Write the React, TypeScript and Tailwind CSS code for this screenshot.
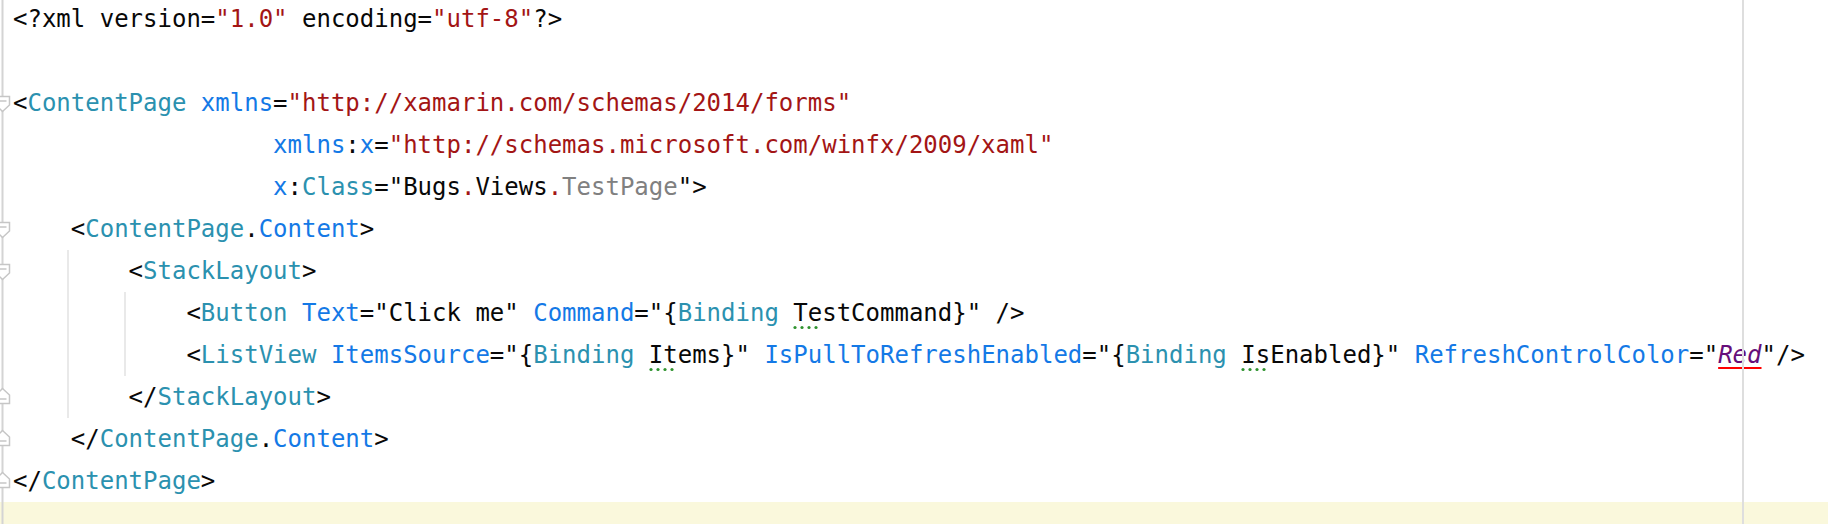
import React from "react";

type Seg = { t: string; c?: string; dots?: boolean; red?: boolean };

const K = "text-[#080808]";
const TEAL = "text-[#2b91af]";
const BLUE = "text-[#1479e6]";
const STR = "text-[#a31515]";
const GRAY = "text-[#808080]";

const s = (t: string, c: string = K): Seg => ({ t, c });

const lines: { segs: Seg[]; indent: number; fold?: "open" | "close" }[] = [
  {
    indent: 0,
    segs: [s("<?xml version="), s('"1.0"', STR), s(" encoding="), s('"utf-8"', STR), s("?>")],
  },
  { indent: 0, segs: [] },
  {
    indent: 0,
    fold: "open",
    segs: [s("<"), s("ContentPage", TEAL), s(" "), s("xmlns", BLUE), s("="), s('"http://xamarin.com/schemas/2014/forms"', STR)],
  },
  {
    indent: 18,
    segs: [s("xmlns", BLUE), s(":"), s("x", BLUE), s("="), s('"http://schemas.microsoft.com/winfx/2009/xaml"', STR)],
  },
  {
    indent: 18,
    segs: [
      s("x", BLUE),
      s(":"),
      s("Class", TEAL),
      s('="Bugs'),
      s(".", STR),
      s("Views"),
      s(".", STR),
      s("TestPage", GRAY),
      s('">'),
    ],
  },
  { indent: 4, fold: "open", segs: [s("<"), s("ContentPage", TEAL), s("."), s("Content", BLUE), s(">")] },
  { indent: 8, fold: "open", segs: [s("<"), s("StackLayout", TEAL), s(">")] },
  {
    indent: 12,
    segs: [
      s("<"),
      s("Button", TEAL),
      s(" "),
      s("Text", BLUE),
      s('="Click me" '),
      s("Command", BLUE),
      s('="{'),
      s("Binding", TEAL),
      s(" "),
      { t: "TestCommand", c: K, dots: true },
      s('}" />'),
    ],
  },
  {
    indent: 12,
    segs: [
      s("<"),
      s("ListView", TEAL),
      s(" "),
      s("ItemsSource", BLUE),
      s('="{'),
      s("Binding", TEAL),
      s(" "),
      { t: "Items", c: K, dots: true },
      s('}" '),
      s("IsPullToRefreshEnabled", BLUE),
      s('="{'),
      s("Binding", TEAL),
      s(" "),
      { t: "IsEnabled", c: K, dots: true },
      s('}" '),
      s("RefreshControlColor", BLUE),
      s('="'),
      { t: "Red", c: "text-[#660e7a]", red: true },
      s('"/>'),
    ],
  },
  { indent: 8, fold: "close", segs: [s("</"), s("StackLayout", TEAL), s(">")] },
  { indent: 4, fold: "close", segs: [s("</"), s("ContentPage", TEAL), s("."), s("Content", BLUE), s(">")] },
  { indent: 0, fold: "close", segs: [s("</"), s("ContentPage", TEAL), s(">")] },
  { indent: 0, segs: [] },
];

function Gutter({ fold }: { fold?: "open" | "close" }) {
  return (
    <svg width="13" height="42" viewBox="0 0 13 42" className="block">
      <rect x="1.5" y="0" width="2" height="42" fill="#d4d4d4" />
      {fold === "open" && (
        <g>
          <polygon points="-4,14.5 9.5,14.5 9.5,23 2.5,29.5 -4,23" fill="#ffffff" stroke="#c6c6c6" strokeWidth="1.5" />
          <line x1="-1" y1="19" x2="6.5" y2="19" stroke="#c6c6c6" strokeWidth="1.5" />
        </g>
      )}
      {fold === "close" && (
        <g>
          <polygon points="-4,19 2.5,12.5 9.5,19 9.5,27.5 -4,27.5" fill="#ffffff" stroke="#c6c6c6" strokeWidth="1.5" />
          <line x1="-1" y1="23" x2="6.5" y2="23" stroke="#c6c6c6" strokeWidth="1.5" />
        </g>
      )}
    </svg>
  );
}

function Dots() {
  return (
    <svg width="30" height="5" viewBox="0 0 30 5" className="absolute left-[0px] top-[26px]">
      <circle cx="2" cy="2.5" r="1.6" fill="#2f932f" />
      <circle cx="9" cy="2.5" r="1.6" fill="#2f932f" />
      <circle cx="16" cy="2.5" r="1.6" fill="#2f932f" />
      <circle cx="23" cy="2.5" r="1.6" fill="#2f932f" />
    </svg>
  );
}

export default function App() {
  return (
    <div className="relative w-[1828px] h-[524px] overflow-hidden bg-white font-['DejaVu_Sans_Mono',monospace] text-[24px] leading-[42px]">
      <div className="flex flex-col -mt-[2px]">
        {lines.map((ln, i) => {
          const n = i + 1;
          return (
            <div key={i} className={`flex h-[42px] shrink-0 ${n === 13 ? "bg-[#faf8dc]" : ""}`}>
              <div className="w-[13px] shrink-0">
                <Gutter fold={ln.fold} />
              </div>
              <div className="relative flex-1 whitespace-pre">
                {n >= 7 && n <= 10 && <span className="absolute left-[54px] top-0 h-[42px] w-[2px] bg-[#e9e9e9]" />}
                {n >= 8 && n <= 9 && <span className="absolute left-[111px] top-0 h-[42px] w-[2px] bg-[#e9e9e9]" />}
                <span>{" ".repeat(ln.indent)}</span>
                {ln.segs.map((sg, j) => {
                  if (sg.dots) {
                    return (
                      <span key={j} className={`relative ${sg.c}`}>
                        {sg.t}
                        <Dots />
                      </span>
                    );
                  }
                  if (sg.red) {
                    return (
                      <span
                        key={j}
                        className={`italic underline decoration-[#ff0000] decoration-2 underline-offset-[4px] ${sg.c}`}
                      >
                        {sg.t}
                      </span>
                    );
                  }
                  return (
                    <span key={j} className={sg.c}>
                      {sg.t}
                    </span>
                  );
                })}
              </div>
            </div>
          );
        })}
      </div>
      <div className="absolute left-[1742px] top-0 h-full w-[2px] bg-[#dedede]" />
    </div>
  );
}
